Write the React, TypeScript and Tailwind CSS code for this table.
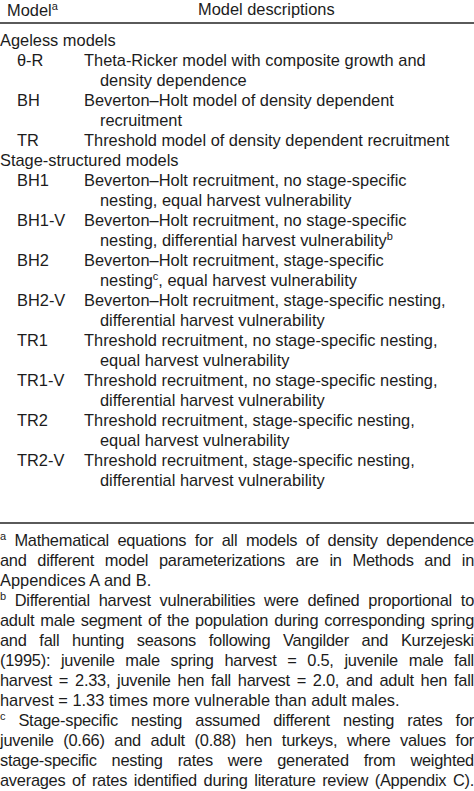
import React from "react";

type Row = { model: string; lines: React.ReactNode[] };

const Sup = ({ c }: { c: string }) => (
  <sup className="text-[11px] relative top-[0px] align-super leading-none">{c}</sup>
);

const ageless: Row[] = [
  { model: "\u03b8-R", lines: ["Theta-Ricker model with composite growth and", "density dependence"] },
  { model: "BH", lines: ["Beverton\u2013Holt model of density dependent", "recruitment"] },
  { model: "TR", lines: ["Threshold model of density dependent recruitment"] },
];

const staged: Row[] = [
  { model: "BH1", lines: ["Beverton\u2013Holt recruitment, no stage-specific", "nesting, equal harvest vulnerability"] },
  {
    model: "BH1-V",
    lines: [
      "Beverton\u2013Holt recruitment, no stage-specific",
      <>nesting, differential harvest vulnerability<Sup c="b" /></>,
    ],
  },
  {
    model: "BH2",
    lines: ["Beverton\u2013Holt recruitment, stage-specific", <>nesting<Sup c="c" />, equal harvest vulnerability</>],
  },
  { model: "BH2-V", lines: ["Beverton\u2013Holt recruitment, stage-specific nesting,", "differential harvest vulnerability"] },
  { model: "TR1", lines: ["Threshold recruitment, no stage-specific nesting,", "equal harvest vulnerability"] },
  { model: "TR1-V", lines: ["Threshold recruitment, no stage-specific nesting,", "differential harvest vulnerability"] },
  { model: "TR2", lines: ["Threshold recruitment, stage-specific nesting,", "equal harvest vulnerability"] },
  { model: "TR2-V", lines: ["Threshold recruitment, stage-specific nesting,", "differential harvest vulnerability"] },
];

function ModelRow({ row }: { row: Row }) {
  return (
    <div className="flex">
      <div className="w-[84px] shrink-0 pl-[17px]">{row.model}</div>
      <div className="flex flex-col">
        {row.lines.map((l, i) => (
          <div key={i} className={i > 0 ? "pl-[16px] whitespace-nowrap" : "whitespace-nowrap"}>
            {l}
          </div>
        ))}
      </div>
    </div>
  );
}

const J = ({ children }: { children: React.ReactNode }) => (
  <div className="text-justify [text-align-last:justify] whitespace-nowrap tracking-[-0.25px]">{children}</div>
);
const L = ({ children }: { children: React.ReactNode }) => <div className="whitespace-nowrap">{children}</div>;

export default function App() {
  return (
    <div
      className="w-[474px] h-[791px] overflow-hidden bg-white text-[#1c1c1c] text-[16.4px] leading-[20px]"
      style={{ fontFamily: '"Liberation Sans", Arial, sans-serif' }}
    >
      <div className="flex h-[22px] pt-[1px] leading-[16px]">
        <div className="w-[198px] pl-[7px]">
          Model<Sup c="a" />
        </div>
        <div>Model descriptions</div>
      </div>
      <div className="h-[2px] bg-[#5a5a5a]" />
      <div className="pt-[6px]">
        <div>Ageless models</div>
        {ageless.map((r) => (
          <ModelRow key={r.model} row={r} />
        ))}
        <div>Stage-structured models</div>
        {staged.map((r) => (
          <ModelRow key={r.model} row={r} />
        ))}
      </div>
      <div className="mt-[32px] h-[2px] bg-[#5a5a5a]" />
      <div className="pt-[6px]">
        <J>
          <Sup c="a" /> Mathematical equations for all models of density dependence
        </J>
        <J>and different model parameterizations are in Methods and in</J>
        <L>Appendices A and B.</L>
        <J>
          <Sup c="b" /> Differential harvest vulnerabilities were defined proportional to
        </J>
        <J>adult male segment of the population during corresponding spring</J>
        <J>and fall hunting seasons following Vangilder and Kurzejeski</J>
        <J>(1995): juvenile male spring harvest = 0.5, juvenile male fall</J>
        <J>harvest = 2.33, juvenile hen fall harvest = 2.0, and adult hen fall</J>
        <L>harvest = 1.33 times more vulnerable than adult males.</L>
        <J>
          <Sup c="c" /> Stage-specific nesting assumed different nesting rates for
        </J>
        <J>juvenile (0.66) and adult (0.88) hen turkeys, where values for</J>
        <J>stage-specific nesting rates were generated from weighted</J>
        <J>averages of rates identified during literature review (Appendix C).</J>
      </div>
    </div>
  );
}
